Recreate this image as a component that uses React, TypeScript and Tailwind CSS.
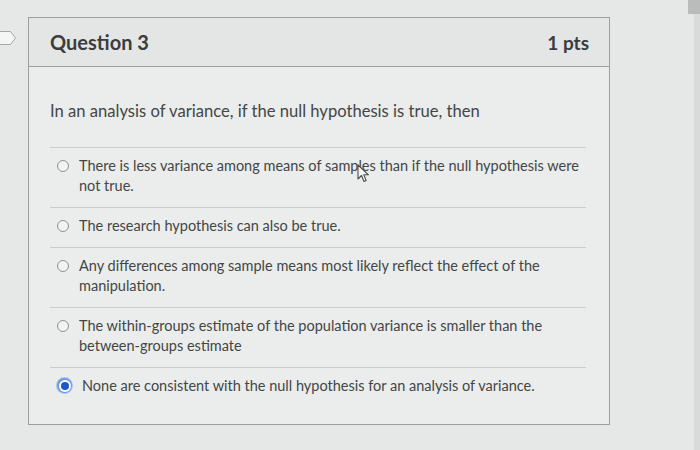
import React from "react";

type Choice = {
  lines: string[];
  selected?: boolean;
};

const choices: Choice[] = [
  {
    lines: [
      "There is less variance among means of samples than if the null hypothesis were",
      "not true.",
    ],
  },
  { lines: ["The research hypothesis can also be true."] },
  {
    lines: [
      "Any differences among sample means most likely reflect the effect of the",
      "manipulation.",
    ],
  },
  {
    lines: [
      "The within-groups estimate of the population variance is smaller than the",
      "between-groups estimate",
    ],
  },
  {
    lines: ["None are consistent with the null hypothesis for an analysis of variance."],
    selected: true,
  },
];

function Radio({ checked }: { checked?: boolean }) {
  if (checked) {
    return (
      <span className="mt-[2px] flex h-[15px] w-[15px] shrink-0 items-center justify-center rounded-full bg-[#6f9ae6] ring-1 ring-[#a9c2ef]">
        <span className="flex h-[12px] w-[12px] items-center justify-center rounded-full bg-white">
          <span className="h-[8px] w-[8px] rounded-full bg-[#1f56c9]" />
        </span>
      </span>
    );
  }
  return (
    <span className="mt-[4px] h-[12px] w-[12px] shrink-0 rounded-full border border-[#8e9191] bg-[#f1f3f2]" />
  );
}

function CursorArrow() {
  return (
    <svg
      className="absolute left-[357px] top-[164px]"
      width="13"
      height="20"
      viewBox="0 0 13 20"
    >
      <path
        d="M1 1 L1 15 L4.5 11.5 L7 17.5 L9.2 16.6 L6.8 10.8 L11.5 10.8 Z"
        fill="#f3f5f4"
        stroke="#4a4c4d"
        strokeWidth="1.1"
        strokeLinejoin="round"
      />
    </svg>
  );
}

export default function App() {
  return (
    <div
      className="relative h-[450px] w-[700px] overflow-hidden bg-[#e6e8e7] pl-[28px] pt-[17px] text-[#444647]"
      style={{ fontFamily: "Lato, 'Open Sans', sans-serif" }}
    >
      {/* previous-question tab peeking in from the left */}
      <svg className="absolute left-0 top-[30px]" width="17" height="16" viewBox="0 0 17 16">
        <path
          d="M-2 1.5 H10.5 L15.5 8 L10.5 14.5 H-2 Z"
          fill="#f4f5f5"
          stroke="#a4a7a6"
          strokeWidth="1"
        />
      </svg>

      {/* edge of the monitor */}
      <div className="absolute right-0 top-0 h-full w-[6px] bg-[#d9dbda]" />
      <div className="absolute right-0 top-0 h-[14px] w-[12px] bg-[#b9bcbb]" />

      <div className="w-[582px] border border-[#9c9f9e] bg-[#eaedeb]">
        <div className="flex h-[49px] items-center justify-between border-b border-[#9c9f9e] bg-[#e3e6e4] pl-[21px] pr-[20px]">
          <h2 className="text-[20px] font-bold leading-none text-[#3b3d3e]">Question 3</h2>
          <span className="text-[19px] font-bold leading-none text-[#3b3d3e]">1 pts</span>
        </div>

        <div className="pb-[17px] pl-[21px] pr-[23px] pt-[33px]">
          <p className="mb-[25px] text-[16.6px] leading-[22px]">
            In an analysis of variance, if the null hypothesis is true, then
          </p>

          <ul>
            {choices.map((choice, i) => (
              <li
                key={i}
                className="flex gap-[10px] border-t border-[#c9cccb] pb-[11px] pl-[7px] pt-[8px]"
              >
                <Radio checked={choice.selected} />
                <span className="text-[14.5px] leading-[20px]">
                  {choice.lines.map((line, j) => (
                    <span key={j} className="block whitespace-nowrap">
                      {line}
                    </span>
                  ))}
                </span>
              </li>
            ))}
          </ul>
        </div>
      </div>

      <CursorArrow />
    </div>
  );
}
